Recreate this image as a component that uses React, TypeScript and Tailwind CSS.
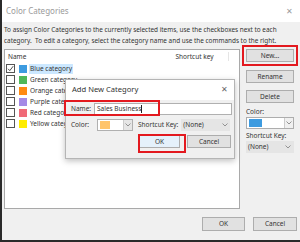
import React from "react";

const cats = [
  { name: "Blue category", color: "bg-[#3d9be0]", checked: true },
  { name: "Green category", color: "bg-[#4fb85a]" },
  { name: "Orange category", color: "bg-[#ff8a12]" },
  { name: "Purple category", color: "bg-[#a58ae6]" },
  { name: "Red category", color: "bg-[#f06a78]" },
  { name: "Yellow category", color: "bg-[#ffec00]" },
];

function Chevron() {
  return (
    <svg width="6" height="4" viewBox="0 0 6 4" className="text-[#888]">
      <path d="M0.5 0.5 L3 3 L5.5 0.5" fill="none" stroke="currentColor" strokeWidth="0.9" />
    </svg>
  );
}

function Btn({ children, cls = "" }: { children: React.ReactNode; cls?: string }) {
  return (
    <div className={`flex items-center justify-center bg-[#e1e1e1] border border-[#adadad] text-[6.5px] text-[#333] whitespace-nowrap ${cls}`}>
      {children}
    </div>
  );
}

export default function App() {
  return (
    <div className="relative w-[300px] h-[242px] overflow-hidden bg-[#f0f0f0] border-l-2 border-b-2 border-[#2a2a2a] font-['Noto_Sans',sans-serif] text-[#333]">
      {/* title bar */}
      <div className="h-[22px] bg-white flex items-center justify-between pl-[4px] pr-[7px]">
        <span className="text-[8px] text-[#9a9a9a]">Color Categories</span>
        <span className="text-[8px] text-[#9a9a9a]">✕</span>
      </div>
      {/* description */}
      <div className="pl-[2px] pt-[2px] h-[27px] text-[6.4px] leading-[11px] whitespace-pre">
        {"To assign Color Categories to the currently selected items, use the checkboxes next to each"}
        <br />
        {"category.  To edit a category, select the category name and use the commands to the right."}
      </div>
      {/* main */}
      <div className="flex pl-[2px]">
        <div className="w-[236px] h-[160px] bg-white border border-[#a9a9a9]">
          <div className="h-[13px] flex items-center text-[6.5px]">
            <div className="w-[156px] pl-[3px]">Name</div>
            <div className="w-[68px] text-center border-r border-[#e5e5e5]">Shortcut key</div>
          </div>
          {cats.map((c) => (
            <div key={c.name} className="h-[11px] flex items-center pl-[1px] text-[6.5px] whitespace-nowrap">
              <div className="w-[9px] h-[9px] border border-[#555] bg-white flex items-center justify-center">
                {c.checked && (
                  <svg width="7" height="7" viewBox="0 0 7 7">
                    <path d="M1 3.8 L2.8 5.6 L6.2 1.2" fill="none" stroke="#222" strokeWidth="0.8" />
                  </svg>
                )}
              </div>
              <div className={`w-[8px] h-[8px] ml-[4px] ${c.color}`} />
              <span className={`ml-[2px] px-[1px] leading-[10px] ${c.checked ? "bg-[#cce8ff]" : ""}`}>{c.name}</span>
            </div>
          ))}
        </div>
        <div className="ml-[6px] w-[48px] flex flex-col text-[6.5px]">
          <Btn cls="h-[13px]">New...</Btn>
          <Btn cls="h-[13px] mt-[8px]">Rename</Btn>
          <Btn cls="h-[13px] mt-[7px]">Delete</Btn>
          <div className="mt-[4px] h-[10px] leading-[10px]">Color:</div>
          <div className="h-[12px] bg-white border border-[#adadad] flex items-center">
            <div className="ml-[2px] w-[13px] h-[8px] bg-[#3d9be0]" />
            <div className="ml-auto w-[9px] h-full border-l border-[#ccc] bg-[#f0f0f0] flex items-center justify-center">
              <Chevron />
            </div>
          </div>
          <div className="mt-[2px] h-[10px] leading-[10px] whitespace-nowrap">Shortcut Key:</div>
          <div className="h-[12px] bg-[#e5e5e5] border border-[#e5e5e5] flex items-center pl-[1px]">
            <span>(None)</span>
            <span className="ml-auto mr-[2px]"><Chevron /></span>
          </div>
        </div>
      </div>
      {/* bottom buttons */}
      <div className="flex justify-end gap-[8px] pr-[3px] mt-[8px]">
        <Btn cls="w-[43px] h-[14px]">OK</Btn>
        <Btn cls="w-[44px] h-[14px]">Cancel</Btn>
      </div>

      {/* red highlight around New */}
      <div className="absolute left-[240px] top-[45px] w-[56px] h-[21px] border-2 border-[#e3191f]" />

      {/* Add New Category dialog */}
      <div className="absolute left-[63px] top-[79px] w-[170px] h-[80px] bg-[#f0f0f0] border border-[#b5b5b5] shadow-[0_2px_6px_rgba(0,0,0,0.25)] text-[6.5px] whitespace-nowrap">
        <div className="h-[20px] bg-white flex items-center justify-between pl-[6px] pr-[6px]">
          <span className="text-[7.6px] text-[#333]">Add New Category</span>
          <span className="text-[7.5px] text-[#666]">✕</span>
        </div>
        <div className="flex items-center h-[13px] mt-[2px] pl-[5px]">
          <span className="w-[23px]">Name:</span>
          <div className="w-[138px] h-[12px] bg-white border border-[#b0b0b0] flex items-center pl-[2px]">
            Sales Business<span className="w-[0.6px] h-[8px] bg-[#222]" />
          </div>
        </div>
        <div className="flex items-center h-[13px] mt-[3px] pl-[5px]">
          <span className="w-[26px]">Color:</span>
          <div className="w-[36px] h-[12px] bg-white border border-[#b0b0b0] flex items-center">
            <div className="ml-[2px] w-[10px] h-[8px] bg-[#ffc46b]" />
            <div className="ml-auto w-[9px] h-full border-l border-[#ccc] bg-[#e6e6e6] flex items-center justify-center">
              <Chevron />
            </div>
          </div>
          <span className="ml-[5px]">Shortcut Key:</span>
          <div className="ml-[3px] w-[49px] h-[12px] bg-[#e5e5e5] flex items-center pl-[2px]">
            <span>(None)</span>
            <span className="ml-auto mr-[2px]"><Chevron /></span>
          </div>
        </div>
        <div className="flex justify-end gap-[7px] pr-[3px] mt-[4px]">
          <Btn cls="w-[41px] h-[13px] border-[#0078d7] bg-[#e5f1fb]">OK</Btn>
          <Btn cls="w-[44px] h-[13px]">Cancel</Btn>
        </div>
      </div>
      {/* red highlights in dialog */}
      <div className="absolute left-[62px] top-[100px] w-[96px] h-[16px] border-2 border-[#e3191f]" />
      <div className="absolute left-[136px] top-[134px] w-[48px] h-[19px] border-2 border-[#e3191f]" />
    </div>
  );
}
